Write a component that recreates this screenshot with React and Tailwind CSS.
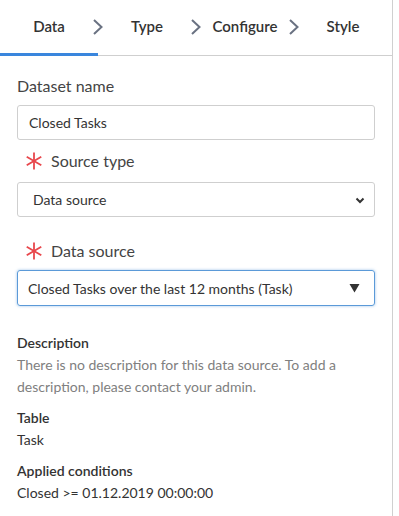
import React from "react";

const Chevron = () => (
  <svg width="12" height="18" viewBox="0 0 12 18" className="text-gray-500">
    <path d="M2 2 L9.5 9 L2 16" fill="none" stroke="currentColor" strokeWidth="2" />
  </svg>
);

const Asterisk = () => (
  <svg width="18" height="18" viewBox="0 0 18 18" className="text-[#e8474c]">
    <g stroke="currentColor" strokeWidth="1.8" strokeLinecap="square">
      <path d="M9 1.5 V16.5" />
      <path d="M2.5 5.2 L15.5 12.8" />
      <path d="M2.5 12.8 L15.5 5.2" />
    </g>
  </svg>
);

const steps = ["Data", "Type", "Configure", "Style"];

export default function App() {
  return (
    <div className="w-[399px] h-[516px] bg-white font-['Lato',sans-serif] text-[#333] overflow-hidden">
      <div className="w-[393px] h-full border-r border-[#d0d0d0]">
        {/* step tabs */}
        <div className="relative h-[56px] border-b border-[#cfcfcf] flex text-[15px] font-semibold text-[#333]">
          {steps.map((s, i) => (
            <div key={s} className="relative w-[98px] flex items-center justify-center pb-[2px]">
              <span>{s}</span>
              {i < steps.length - 1 && (
                <span className="absolute right-[-6px] top-[18px]">
                  <Chevron />
                </span>
              )}
            </div>
          ))}
          <div className="absolute left-0 bottom-[-1px] w-[98px] h-[3px] bg-[#3a86dd]" />
        </div>

        <div className="px-[17px] pt-[20px] w-[358px] box-content">
          <div className="text-[16px] text-[#444] leading-[20px]">Dataset name</div>
          <div className="mt-[9px] h-[35px] border border-[#cfcfcf] rounded-[3px] flex items-center pl-[11px] text-[14px] text-[#333]">
            Closed Tasks
          </div>

          <div className="mt-[11px] flex items-center gap-[8px] pl-[8px] text-[16px] text-[#444] leading-[20px]">
            <Asterisk />
            <span>Source type</span>
          </div>
          <div className="mt-[11px] h-[35px] border border-[#cfcfcf] rounded-[3px] flex items-center justify-between pl-[15px] pr-[8px] text-[14px] text-[#333]">
            <span>Data source</span>
            <svg width="12" height="12" viewBox="0 0 12 12">
              <path d="M2.5 4.5 L6 8 L9.5 4.5" fill="none" stroke="#333" strokeWidth="2" />
            </svg>
          </div>

          <div className="mt-[24px] flex items-center gap-[8px] pl-[8px] text-[16px] text-[#444] leading-[20px]">
            <Asterisk />
            <span>Data source</span>
          </div>
          <div className="mt-[9px] h-[36px] border border-[#5b9ad8] rounded-[3px] shadow-[0_0_3px_rgba(91,154,216,0.6)] flex items-center justify-between pl-[10px] pr-[14px] text-[14px] text-[#333]">
            <span>Closed Tasks over the last 12 months (Task)</span>
            <svg width="11" height="10" viewBox="0 0 11 10">
              <path d="M0.5 1 H10.5 L5.5 9.5 Z" fill="#333" />
            </svg>
          </div>

          <div className="mt-[26px] text-[14px] leading-[22px]">
            <div className="font-semibold text-[#333]">Description</div>
            <div className="text-[#808080]">
              There is no description for this data source. To add a description, please contact your admin.
            </div>
            <div className="mt-[9px] font-semibold text-[#333]">Table</div>
            <div className="text-[#333]">Task</div>
            <div className="mt-[9px] font-semibold text-[#333]">Applied conditions</div>
            <div className="text-[#333]">Closed &gt;= 01.12.2019 00:00:00</div>
          </div>
        </div>
      </div>
    </div>
  );
}
